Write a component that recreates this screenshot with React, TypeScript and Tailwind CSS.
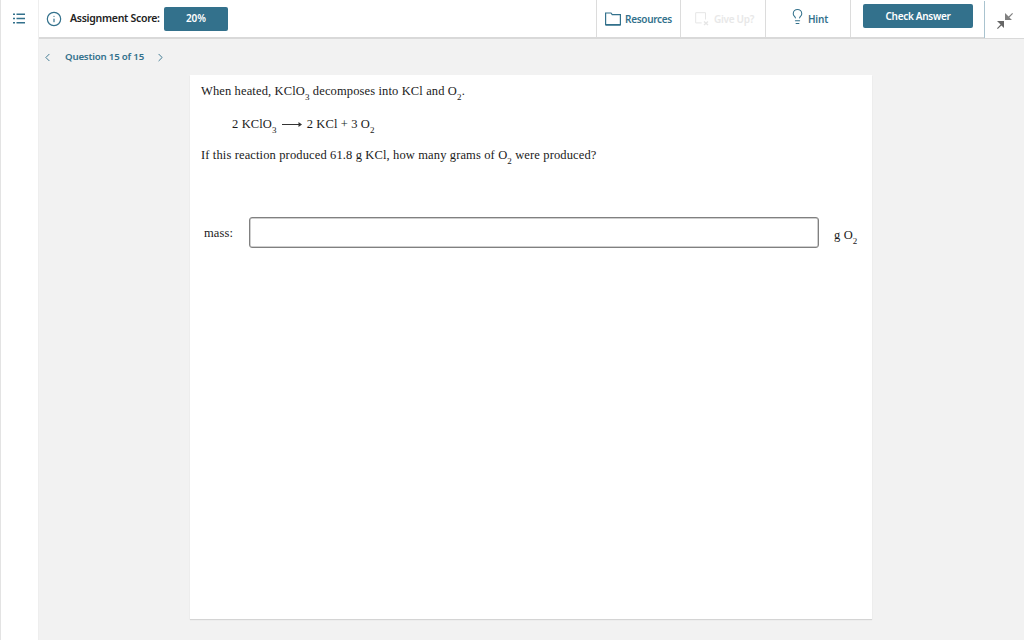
import { ChevronLeft, ChevronRight, Info, Lightbulb } from 'lucide-react';

const SANS = "font-['Noto_Sans',sans-serif]";

const Sub = ({ n }: { n: number }) => (
  <sub className="text-[9px] leading-none align-[-3px]">{n}</sub>
);

const HeaderCell = ({ className, children }: { className: string; children: React.ReactNode }) => (
  <div className={`h-full flex items-center border-l border-[#dcdcdc] ${className}`}>{children}</div>
);

const App = () => {
  return (
    <div className="w-[1024px] h-[640px] flex overflow-hidden bg-[#f2f2f2]">
      <aside className="w-[39px] h-full shrink-0 bg-white border-l border-l-[#e3e3e3] border-r border-r-[#eeeeee]">
        <div className="h-[37px] flex items-center justify-center pr-[1px]">
          <svg width="12" height="11" viewBox="0 0 12 11" stroke="#33718c" strokeWidth="1.5" fill="none">
            <path d="M3.5 1.2H12M3.5 5.5H12M3.5 9.8H12" />
            <path d="M0 1.2h2M0 5.5h2M0 9.8h2" />
          </svg>
        </div>
      </aside>

      <div className={`flex-1 flex flex-col ${SANS}`}>
        <header className="h-[39px] shrink-0 bg-white border-b-2 border-[#d9d9d9] flex items-center">
          <Info size={16} className="ml-[7px] text-[#33718c]" strokeWidth={1.8} />
          <span className="ml-[8px] w-[94px] text-[10.5px] font-semibold text-[#222222] tracking-[-0.28px] whitespace-nowrap">Assignment Score:</span>
          <div className="w-[64px] h-[24px] rounded-[2px] bg-[#33718c] text-white text-[10px] font-semibold flex items-center justify-center">20%</div>

          <HeaderCell className="ml-[368px] w-[84px] pl-[8px]">
            <svg width="16" height="14" viewBox="0 0 16 14" fill="none" stroke="#33718c" strokeWidth="1.2">
              <path d="M0.6 12.6V1h5.4l1.2 1.6h8.2v10z" />
              <path d="M0.6 12.9h15" strokeWidth="1.6" />
            </svg>
            <span className="ml-[4px] mt-[2px] text-[10px] font-semibold tracking-[-0.3px] text-[#33718c]">Resources</span>
          </HeaderCell>
          <HeaderCell className="w-[85px] pl-[14px]">
            <svg width="15" height="14" viewBox="0 0 15 14" fill="none" stroke="#e6e6e6" strokeWidth="1">
              <path d="M10.5 7.5V0.7H0.7v10.2h6" />
              <path d="M9 9.5l4 3.6M13 9.5l-4 3.6" strokeWidth="1.4" />
            </svg>
            <span className="ml-[4px] mt-[2px] text-[10px] font-semibold tracking-[-0.3px] text-[#e8e8e8]">Give Up?</span>
          </HeaderCell>
          <HeaderCell className="w-[85px] pl-[23px]">
            <Lightbulb size={17} className="text-[#33718c] mb-[4px]" strokeWidth={1.5} />
            <span className="ml-[2px] mt-[2px] text-[10px] font-semibold tracking-[-0.2px] text-[#33718c]">Hint</span>
          </HeaderCell>
          <div className="h-full w-[134px] flex border-l border-[#dcdcdc]">
            <button className="ml-[12px] mt-[4px] w-[110px] h-[24px] rounded-[2px] bg-[#33718c] text-white text-[10px] font-semibold tracking-[-0.3px]">Check Answer</button>
          </div>
          <div className="h-full flex-1 flex items-center justify-center border-l border-[#a9c3cf] mb-[-2px] bg-white">
            <svg width="18" height="18" viewBox="0 0 18 18" className="mt-[2px] ml-[1px]">
              <path d="M9 1v7h7l-2.6-2.6L17 1.8 16.2 1l-3.6 3.6z" fill="#808080" />
              <path d="M1 9h7v7l-2.6-2.6L1.8 17 1 16.2l3.6-3.6z" fill="#666666" />
            </svg>
          </div>
        </header>

        <nav className="h-[36px] shrink-0 flex items-center text-[#33718c]">
          <ChevronLeft size={13} className="ml-[2px]" strokeWidth={1.7} />
          <span className="ml-[11px] text-[9.7px] font-semibold tracking-[-0.2px] whitespace-nowrap">Question 15 of 15</span>
          <ChevronRight size={13} className="ml-[10px]" strokeWidth={1.7} />
        </nav>

        <main className="ml-[151px] w-[682px] h-[544px] bg-white shadow-[0_1px_1px_rgba(0,0,0,0.12)] pl-[11px] pr-[14px] pt-[7px] font-['Liberation_Serif',serif] text-[12.5px] tracking-[0.13px] text-[#1a1a1a]">
          <p className="h-[18px] leading-[18px]">
            When heated, KClO<Sub n={3} /> decomposes into KCl and O<Sub n={2} />.
          </p>
          <p className="mt-[15px] ml-[31px] h-[18px] leading-[18px] flex items-center whitespace-pre">
            <span>2 KClO<Sub n={3} /></span>
            <svg width="20" height="7" viewBox="0 0 20 7" className="ml-[5px] mr-[5px]" fill="#333333">
              <path d="M0 3h16.5V1L20 3.5 16.5 6V4H0z" />
            </svg>
            <span>2 KCl + 3 O<Sub n={2} /></span>
          </p>
          <p className="mt-[13px] h-[18px] leading-[18px]">
            If this reaction produced 61.8 g KCl, how many grams of O<Sub n={2} /> were produced?
          </p>
          <div className="mt-[53px] flex items-center h-[30px]">
            <span className="ml-[3px] w-[45px] mt-[3px]">mass:</span>
            <input className="w-[570px] h-[31px] rounded-[3px] border border-[#808080] shadow-[inset_0_0_0_0.5px_#a0a0a0] bg-white outline-none" />
            <span className="ml-[15px] mt-[7px] whitespace-nowrap">g O<Sub n={2} /></span>
          </div>
        </main>
      </div>
    </div>
  );
};

export default App;
